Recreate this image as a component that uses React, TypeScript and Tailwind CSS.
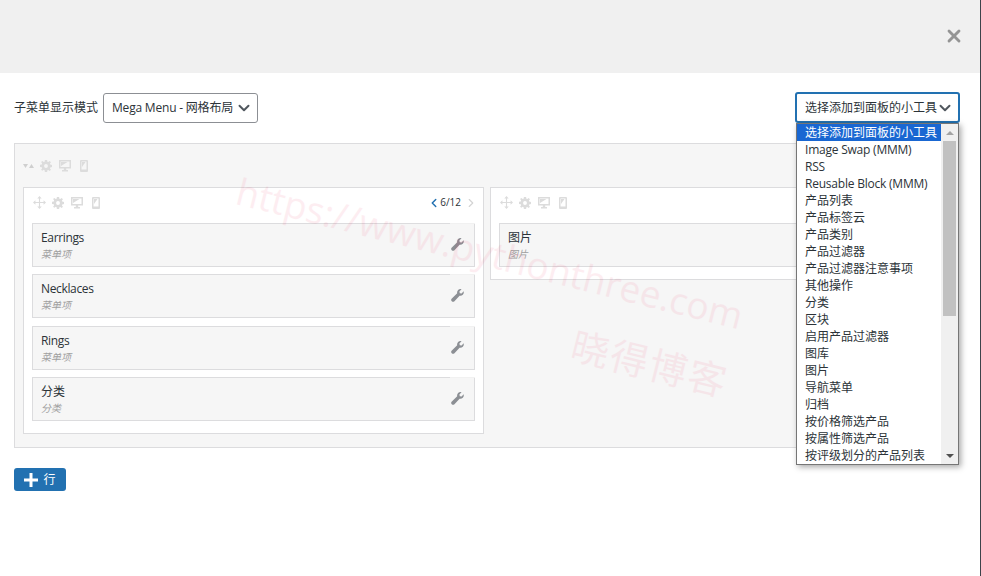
import { X, ChevronDown, ChevronLeft, ChevronRight } from 'lucide-react';

const options = [
  '选择添加到面板的小工具',
  'Image Swap (MMM)',
  'RSS',
  'Reusable Block (MMM)',
  '产品列表',
  '产品标签云',
  '产品类别',
  '产品过滤器',
  '产品过滤器注意事项',
  '其他操作',
  '分类',
  '区块',
  '启用产品过滤器',
  '图库',
  '图片',
  '导航菜单',
  '归档',
  '按价格筛选产品',
  '按属性筛选产品',
  '按评级划分的产品列表',
];

const font = 'font-["Open_Sans","Noto_Sans_CJK_SC",sans-serif]';

function MoveIcon() {
  return (
    <svg width="13" height="13" viewBox="0 0 14 14" fill="#dcdcdc">
      <path d="M7 0l2.4 2.6H7.6V6.400h3.800V4.600L14 7l-2.600 2.400V7.600H7.600v3.800h1.800L7 14l-2.400-2.600h1.800V7.600H2.600v1.800L0 7l2.600-2.400v1.800h3.800V2.600H4.600z" />
    </svg>
  );
}

function GearIcon() {
  return (
    <svg width="12" height="12" viewBox="0 0 13 13" fill="#dcdcdc">
      <path fillRule="evenodd" d="M5.3 0h2.4l.3 1.9 1 .4L10.600 1.200l1.200 1.200-1.100 1.600.4 1 1.900.3v2.400l-1.900.3-.4 1 1.100 1.600-1.200 1.200-1.600-1.100-1 .4-.3 1.900H5.300L5 11l-1-.4-1.600 1.100-1.200-1.200 1.100-1.600-.4-1L0 7.600V5.200l1.900-.3.4-1-1.100-1.600 1.200-1.200L4 2.200l1-.4zM6.500 4.400a2.100 2.100 0 1 0 0 4.200 2.100 2.100 0 0 0 0-4.200z" />
    </svg>
  );
}

function DesktopIcon() {
  return (
    <svg width="12" height="12" viewBox="0 0 12 12" fill="#dcdcdc">
      <path fillRule="evenodd" d="M0 0h12v8.500H7.200V10H9v1.500H3V10h1.800V8.500H0zM1.500 1.500V7h9V1.500z" />
      <path d="M2 2h6.500L2 6z" />
    </svg>
  );
}

function PhoneIcon() {
  return (
    <svg width="8" height="12" viewBox="0 0 8 12" fill="#dcdcdc">
      <path fillRule="evenodd" d="M1 0h6a1 1 0 0 1 1 1v10a1 1 0 0 1-1 1H1a1 1 0 0 1-1-1V1a1 1 0 0 1 1-1zM1.500 1.500V9.500h5V1.500z" />
      <path d="M2 2h3.500L2 7z" />
    </svg>
  );
}

function CollapseIcon() {
  return (
    <svg width="11" height="6" viewBox="0 0 11 6" fill="#cfcfcf">
      <path d="M0 1h5L2.500 5zM6 5l2.500-4L11 5z" />
    </svg>
  );
}

function WrenchIcon() {
  return (
    <svg width="13" height="13" viewBox="0 0 13 13" fill="#8c8f94">
      <path d="M12.600 2.300c.4 1.300.1 2.600-.8 3.500-.9.900-2.100 1.200-3.200.9L3.200 12.400c-.6.600-1.600.6-2.200 0l-.4-.4c-.6-.6-.6-1.600 0-2.200L6.200 4.300C5.900 3.200 6.200 1.900 7.100 1 8 .2 9.300-.2 10.500.2L8.400 2.400l.4 1.800 1.800.4z" />
    </svg>
  );
}

function WidgetCard({ title, sub, latin, extraGap }: { title: string; sub: string; latin?: boolean; extraGap?: boolean }) {
  return (
    <div className={`relative h-[44px] border border-[#dcdcde] bg-[#f6f6f6] pl-2 pt-[5px] ${extraGap ? 'mt-[1px]' : ''}`}>
      <div className="absolute -top-px -right-px h-px w-[25px] bg-[#f1f1f1]" />
      <div className={latin ? 'text-[12px] leading-[18px] tracking-[-0.35px] text-[#2c3338]' : 'text-[12px] leading-[18px] text-[#2c3338]'}>
        {title}
      </div>
      <div className="text-[10px] leading-[15px] italic text-[#a0a0a0]">{sub}</div>
      <div className="absolute right-[10px] top-[14px]">
        <WrenchIcon />
      </div>
    </div>
  );
}

function ColumnToolbar({ showPager }: { showPager?: boolean }) {
  return (
    <div className="flex h-[35px] items-center gap-[6px] pb-[6px] pl-[1px]">
      <MoveIcon />
      <GearIcon />
      <div className="ml-[1px]">
        <DesktopIcon />
      </div>
      <div className="ml-[3px]">
        <PhoneIcon />
      </div>
      {showPager && (
        <div className="-mr-[3px] ml-auto flex items-center text-[10px] text-[#2c3338]">
          <ChevronLeft size={14} strokeWidth={2.5} className="-mr-[2px] text-[#2271b1]" />
          <span className="mx-[1px]">6/12</span>
          <ChevronRight size={14} strokeWidth={2} className="ml-[2px] text-[#d4d4d4]" />
        </div>
      )}
    </div>
  );
}

function Column({ className, children }: { className: string; children: React.ReactNode }) {
  return <div className={`border border-[#dcdcde] bg-white ${className}`}>{children}</div>;
}

export default function App() {
  return (
    <div className={`relative h-[576px] w-[981px] overflow-hidden border-r border-[#3c434a] bg-white ${font}`}>
      <div className="flex h-[73px] items-center justify-end bg-[#f0f0f0] pb-[1px] pr-[16px]">
        <X size={20} strokeWidth={3.4} className="text-[#949494]" />
      </div>

      <div className="flex items-end justify-between pl-[14px] pr-[20px] pt-[19px]">
        <div className="flex items-center gap-[5px]">
          <span className="text-[12px] text-[#2c3338]">子菜单显示模式</span>
          <div className="flex h-[30px] w-[155px] items-center justify-between rounded-[3px] border border-[#8c8f94] pl-[8px] pr-[4px] text-[12px] text-[#2c3338]">
            <span className="whitespace-nowrap tracking-[-0.2px]">Mega Menu - 网格布局</span>
            <ChevronDown size={18} strokeWidth={2.6} className="-ml-[6px] shrink-0 text-[#50575e]" />
          </div>
        </div>

        <div className="flex h-[31px] w-[165px] items-center justify-between rounded-[3px] border-2 border-[#2271b1] pl-[8px] pr-[4px] text-[12px] text-[#2c3338]">
          <span className="whitespace-nowrap">选择添加到面板的小工具</span>
          <ChevronDown size={18} strokeWidth={2.6} className="-ml-[6px] shrink-0 text-[#50575e]" />
        </div>
      </div>

      <div className="ml-[14px] mt-[20px] h-[305px] w-[943px] border border-[#dcdcde] bg-[#f6f6f6] px-[8px]">
        <div className="flex h-[43px] items-center gap-[6px]">
          <CollapseIcon />
          <GearIcon />
          <div className="ml-[1px]">
            <DesktopIcon />
          </div>
          <div className="ml-[3px]">
            <PhoneIcon />
          </div>
        </div>
        <div className="flex items-start gap-[6px]">
          <Column className="h-[247px] w-[461px] px-[8px]">
            <ColumnToolbar showPager />
            <div className="flex flex-col gap-[7px]">
              <WidgetCard title="Earrings" sub="菜单项" latin />
              <WidgetCard title="Necklaces" sub="菜单项" latin />
              <WidgetCard title="Rings" sub="菜单项" latin extraGap />
              <WidgetCard title="分类" sub="分类" />
            </div>
          </Column>
          <Column className="h-[93px] w-[450px] px-[8px]">
            <ColumnToolbar />
            <WidgetCard title="图片" sub="图片" />
          </Column>
        </div>
      </div>

      <div className="ml-[14px] mt-[20px] flex h-[23px] w-[52px] items-center justify-center gap-[5px] rounded-[3px] bg-[#2271b1] text-[12px] text-white">
        <svg width="14" height="14" viewBox="0 0 14 14" fill="white">
          <path d="M5.500 0h3v5.500H14v3H8.500V14h-3V8.500H0v-3h5.500z" />
        </svg>
        <span>行</span>
      </div>

      {/* dropdown list of the widget select */}
      <div className="absolute left-[796px] top-[123px] flex h-[342px] w-[163px] border border-[#767676] bg-white shadow-[2px_2px_6px_rgba(0,0,0,0.35)]">
        <div className="w-[144px] text-[12px] leading-[17px] text-[#2c3338]">
          {options.map((o, i) => (
            <div
              key={o}
              className={
                i === 0
                  ? 'whitespace-nowrap bg-[#1967d2] pl-[8px] text-white'
                  : /^[A-Z]/.test(o)
                    ? 'pl-[8px] tracking-[-0.22px]'
                    : 'pl-[8px]'
              }
            >
              {o}
            </div>
          ))}
        </div>
        <div className="flex w-[17px] flex-col items-center bg-[#f0f0f0]">
          <div className="flex h-[17px] items-center">
            <div className="h-0 w-0 border-x-[4px] border-b-[4px] border-x-transparent border-b-[#a3a3a3]" />
          </div>
          <div className="h-[175px] w-[13px] bg-[#c1c1c1]" />
          <div className="mt-auto flex h-[17px] items-center">
            <div className="h-0 w-0 border-x-[4px] border-t-[4px] border-x-transparent border-t-[#505050]" />
          </div>
        </div>
      </div>

      {/* watermark */}
      <div className="pointer-events-none absolute left-[228px] top-[229px] w-[524px] rotate-[14deg] whitespace-nowrap text-center text-[37px] leading-[48px] text-[#e8003a]/[0.07]">
        https://www.pythonthree.com
      </div>
      <div className="pointer-events-none absolute left-[570px] top-[339px] rotate-[14deg] whitespace-nowrap text-[38px] leading-[48px] tracking-[2px] text-[#e8003a]/[0.07]">
        晓得博客
      </div>
    </div>
  );
}
